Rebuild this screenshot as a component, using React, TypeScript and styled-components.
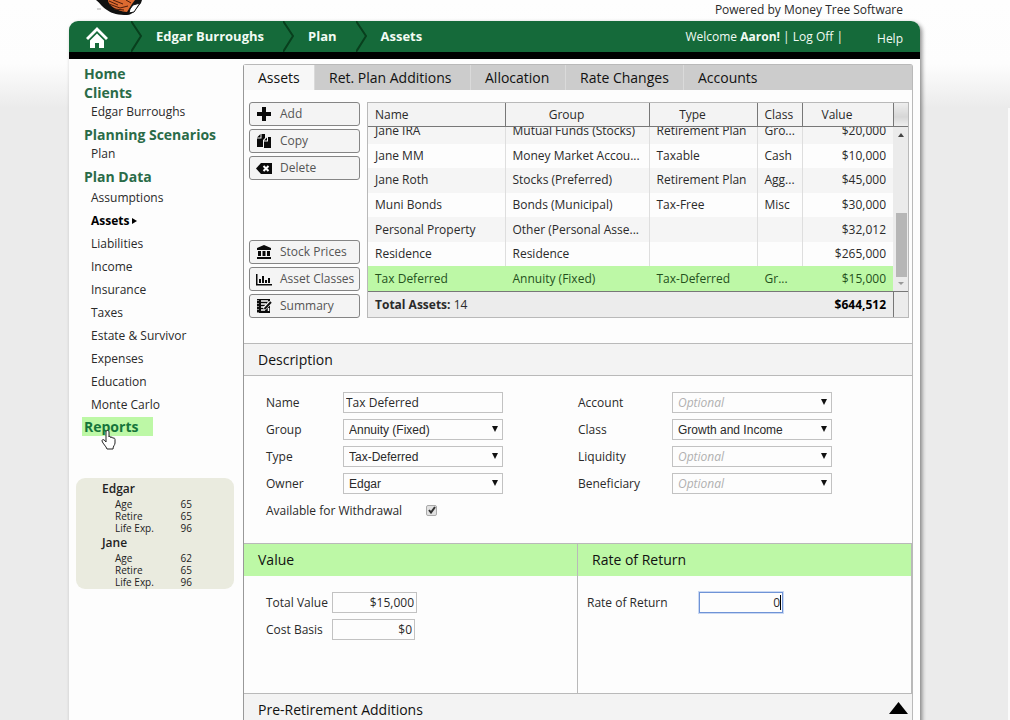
import React, { useId } from 'react';
import styled, { createGlobalStyle, css } from 'styled-components';

const font = '"Open Sans", "Noto Sans", sans-serif';
const green = '#156a3a';
const highlight = '#bdf8a6';
const line = '#b9b9b9';

const GlobalStyle = createGlobalStyle`
  * { box-sizing: border-box; }
  html { background: #ebebeb; }
  body {
    margin: 0;
    font: 12px/20px ${font};
    color: #2a2a2a;
    background: linear-gradient(#fefefe 0, #fdfdfd 64px, #ebebeb 108px) no-repeat;
    min-height: 100vh;
    overflow: hidden;
  }
  button, input, select { font: inherit; color: inherit; }
  a { color: inherit; text-decoration: none; }
`;

/* ---------- page frame ---------- */

const Page = styled.div`
  display: flex;
  align-items: flex-start;
  height: 100vh;
  overflow: hidden;
`;

const Frame = styled.div`
  flex: 1;
  margin: 0 88px 0 69px;
`;

const PageEdge = styled.div`
  flex: none;
  width: 2px;
  height: 100vh;
  margin-top: 108px;
  background: #fafafa;
`;

const Masthead = styled.header`
  display: flex;
  justify-content: space-between;
  align-items: flex-start;
  height: 21px;
  padding: 0 17px 0 26px;
`;

const Powered = styled.span`
  line-height: 20px;
`;

const Panel = styled.div`
  border-radius: 9px 9px 0 0;
  background: #fdfdfd;
  box-shadow: 2px 2px 4px rgba(0, 0, 0, 0.45);
  min-height: 740px;
`;

const NavBar = styled.nav`
  display: flex;
  align-items: stretch;
  height: 38px;
  border-bottom: 7px solid #000;
  border-radius: 9px 9px 0 0;
  background: ${green};
  color: #f2fbf4;
  font-weight: 500;
  overflow: hidden;
`;

const HomeLink = styled.a`
  display: flex;
  align-items: center;
  width: 62px;
  padding: 3px 0 0 17px;
`;

const Crumb = styled.a`
  padding: 0 19px 0 13px;
  font-size: 13px;
  font-weight: 700;
  line-height: 31px;
`;

const Account = styled.div`
  margin-left: auto;
  padding-right: 17px;
  display: flex;
  gap: 34px;
  line-height: 32px;
`;

const HelpLink = styled.a`
  line-height: 36px;
`;

const Columns = styled.div`
  display: flex;
  align-items: flex-start;
  padding: 5px 7px 0 0;
`;

/* ---------- side menu ---------- */

const Side = styled.aside`
  flex: none;
  width: 174px;
`;

const SideNav = styled.nav`
  padding-left: 13px;
`;

const SideHeading = styled.a<{ $active?: boolean }>`
  display: block;
  position: relative;
  width: ${p => (p.$active ? '71px' : 'auto')};
  padding-left: 2px;
  font-size: 14px;
  line-height: 19px;
  font-weight: 700;
  color: ${p => (p.$active ? '#15753a' : '#2a6b48')};
  background: ${p => (p.$active ? highlight : 'transparent')};
`;

const SideList = styled.ul<{ $spaced?: boolean }>`
  list-style: none;
  margin: 0 0 ${p => (p.$spaced ? '1px' : '3px')};
  padding: 0 0 0 9px;
  line-height: ${p => (p.$spaced ? '23px' : '20px')};
`;

const SideItem = styled.a<{ $current?: boolean }>`
  display: flex;
  align-items: center;
  gap: 3px;
  ${p => p.$current && css`font-weight: 700; color: #000;`}
`;

const HandCursor = styled.svg`
  position: absolute;
  left: 18px;
  top: 12px;
`;

const FamilyBox = styled.section`
  margin: 42px 9px 0 7px;
  padding: 2px 42px 1px 26px;
  border-radius: 9px;
  background: #eaebdf;
  color: #222;
`;

const Person = styled.h3`
  margin: 0;
  font-size: 12px;
  line-height: 18px;
  font-weight: 600;
`;

const Facts = styled.dl`
  display: grid;
  grid-template-columns: 1fr auto;
  margin: 0;
  padding-left: 13px;
  font-size: 10px;
  line-height: 12px;
  dt, dd { margin: 0; }
`;

/* ---------- main area ---------- */

const Main = styled.main`
  flex: 1;
  min-width: 0;
  border: 1px solid ${line};
  border-left-color: #999;
  border-radius: 3px 3px 0 0;
`;

const TabBar = styled.div`
  display: flex;
  height: 25px;
  background: #ccc;
`;

const Tab = styled.button<{ $active?: boolean; $w: number }>`
  width: ${p => p.$w}px;
  border: 0;
  border-right: 1px solid #dadada;
  padding: 0 0 0 14px;
  text-align: left;
  white-space: nowrap;
  font-size: 14px;
  line-height: 24px;
  color: #111;
  background: ${p => (p.$active ? '#f7f7f7' : 'transparent')};
  &:last-child { border-right: 0; }
`;

const AssetArea = styled.div`
  display: flex;
  gap: 7px;
  padding: 12px 3px 25px 5px;
`;

const Tools = styled.div`
  display: flex;
  flex-direction: column;
  justify-content: space-between;
  flex: none;
  width: 111px;
`;

const ToolGroup = styled.div`
  display: flex;
  flex-direction: column;
  gap: 3px;
`;

const ToolButton = styled.button`
  display: flex;
  align-items: center;
  gap: 8px;
  height: 24px;
  padding: 0 0 0 6px;
  border: 1px solid #858585;
  border-radius: 3px;
  background: #f4f4f4;
  color: #555;
  white-space: nowrap;
  svg { flex: none; color: #0a0a0a; }
`;

const GridFrame = styled.div`
  flex: 1;
  min-width: 0;
  border: 1px solid ${line};
`;

const DataTable = styled.table`
  width: 100%;
  table-layout: fixed;
  border-collapse: collapse;
  th, td {
    padding: 0 2px 0 7px;
    overflow: hidden;
    white-space: nowrap;
    text-overflow: ellipsis;
    text-align: left;
    font-weight: 400;
  }
`;

const HeadTable = styled(DataTable)`
  height: 24px;
  background: #f3f3f3;
  border-bottom: 1px solid #777;
  th { border-right: 1px solid #777; }
  th:nth-child(2), th:nth-child(3), th:nth-child(5) { text-align: center; padding-right: 28px; }
  td { background: linear-gradient(#eee, #d6d6d6 60%, #eee); }
`;

const Viewport = styled.div`
  display: flex;
  height: 164px;
`;

const Rows = styled.div`
  flex: 1;
  min-width: 0;
  display: flex;
  align-items: flex-end;
  overflow: hidden;
`;

const BodyTable = styled(DataTable)`
  height: 172px;
  flex: none;
  td { border-right: 1px solid #dedede; }
  td:last-child { text-align: right; border-right: 0; padding-right: 7px; }
`;

const Row = styled.tr<{ $selected?: boolean }>`
  background: #fdfdfd;
  &:nth-child(odd) { background: #f5f5f5; }
  ${p => p.$selected && css`
    && { background: ${highlight}; color: #24501c; }
    && td { border-color: ${highlight}; }
  `}
`;

const ScrollTrack = styled.div`
  display: flex;
  flex-direction: column;
  align-items: center;
  width: 15px;
  padding: 6px 1px 6px 2px;
  background: #ebebeb;
`;

const ScrollThumb = styled.div`
  width: 11px;
  height: 64px;
  margin: auto 0 5px;
  background: #b6b6b6;
`;

const Totals = styled.div`
  display: flex;
  height: 26px;
  line-height: 25px;
  border-top: 1px solid #777;
  background: #ececec;
`;

const TotalCount = styled.span`
  flex: 1;
  padding-left: 7px;
`;

const TotalValue = styled.strong`
  padding-right: 7px;
  color: #000;
`;

const TotalEnd = styled.span`
  width: 15px;
  border-left: 1px solid #777;
`;

const Bar = styled.h2<{ $green?: boolean }>`
  display: flex;
  justify-content: space-between;
  align-items: center;
  margin: 0;
  height: 33px;
  padding: 0 4px 0 14px;
  border-top: 1px solid ${line};
  border-bottom: 1px solid ${p => (p.$green ? highlight : line)};
  background: ${p => (p.$green ? highlight : '#f3f3f3')};
  font-size: 14px;
  font-weight: 400;
  color: #111;
`;

const CollapseButton = styled.button`
  border: 0;
  padding: 0 0 4px;
  display: flex;
  background: none;
  color: #000;
`;

const FormGrid = styled.form`
  display: grid;
  grid-template-columns: 1fr 1fr;
  padding: 16px 0 22px;
`;

const FieldColumn = styled.div<{ $indent: number }>`
  display: flex;
  flex-direction: column;
  gap: 6px;
  padding-left: ${p => p.$indent}px;
`;

const FieldRow = styled.div`
  display: flex;
  align-items: center;
  min-height: 21px;
`;

const Label = styled.label<{ $w: number }>`
  flex: none;
  width: ${p => p.$w}px;
  white-space: nowrap;
`;

const control = css`
  height: 21px;
  border: 1px solid #c2c2c2;
  border-radius: 0;
  background: #fdfdfd;
  outline: 0;
`;

const TextInput = styled.input`
  ${control}
  width: 160px;
  padding: 0 2px;
`;

const MoneyInput = styled.input<{ $w: number; $focused?: boolean }>`
  ${control}
  width: ${p => p.$w}px;
  padding: 0 2px;
  text-align: right;
  ${p => p.$focused && css`border: 1px solid #6f93d6; box-shadow: 0 0 0 1px #c9d8f3;`}
`;

const SelectWrap = styled.span`
  position: relative;
  display: flex;
  svg { position: absolute; right: 5px; top: 7px; pointer-events: none; }
`;

const Select = styled.select<{ $empty?: boolean }>`
  ${control}
  appearance: none;
  width: 160px;
  padding: 0 20px 0 5px;
  line-height: 18px;
  font-family: "Liberation Sans", Arial, sans-serif;
  ${p => p.$empty && css`font-family: ${font}; font-style: italic; color: #b0b0b0;`}
`;

const CheckWrap = styled.span`
  position: relative;
  display: flex;
  svg { position: absolute; left: 2px; top: 1px; pointer-events: none; }
`;

const Check = styled.input`
  appearance: none;
  width: 11px;
  height: 11px;
  margin: 0;
  border: 1px solid #aaa;
  border-radius: 2px;
  background: #e2e2e2;
`;

const Halves = styled.div`
  display: grid;
  grid-template-columns: 1fr 1fr;
`;

const Half = styled.section`
  min-height: 150px;
  border-right: 1px solid ${line};
`;

const HalfBody = styled.div<{ $indent: number }>`
  display: flex;
  flex-direction: column;
  gap: 6px;
  padding: 16px 0 0 ${p => p.$indent}px;
`;

const CaretWrap = styled.span`
  position: relative;
  display: flex;
`;

const Caret = styled.i`
  position: absolute;
  right: 2px;
  top: 3px;
  width: 1px;
  height: 15px;
  background: #000;
`;

/* ---------- drawings ---------- */

const Logo = () => (
  <svg width="48" height="16" viewBox="0 0 48 16" role="img" aria-label="Beaver logo">
    <path d="M1 0 C5 3 8 8 12 10 C17 14 24 15 32 15 C38 15 40 10 46 3 L47 0Z" fill="#111" />
    <path d="M13 0 C13 5 21 11 32 12 L37 4 L40 0Z" fill="#dd6a30" />
    <path
      d="M14 1 L23 5 M18 0 L28 4 M14 4 L25 8 L33 6 M19 9 L29 10 M31 0 L36 3"
      stroke="#4d1d0c" fill="none"
    />
    <path d="M45 3 L39 12 L34 13 L35 9 L38 5Z" fill="#fff" stroke="#111" />
    <path d="M2 9h4" stroke="#aaa" />
  </svg>
);

const HomeIcon = () => (
  <svg width="22" height="22" viewBox="0 0 22 22" fill="#fff">
    <path d="M11 0 L22 11 L20 13 L11 4 L2 13 L0 11Z" />
    <path d="M11 6.500 L18 13.500 V21 H13 V16 H9 V21 H4 V13.500Z" />
  </svg>
);

const Chevron = () => (
  <svg width="12" height="31" viewBox="0 0 12 31" fill="none">
    <path d="M0 0 L10 15 L0 31" stroke="#083f1d" strokeWidth="2" />
  </svg>
);

const DownMark = () => (
  <svg width="6" height="6" viewBox="0 0 6 6"><path d="M0 0H6L3 6Z" fill="#111" /></svg>
);

const icons: Record<string, React.ReactNode> = {
  Add: <path d="M6 1h4v5h5v4h-5v5H6v-5H1V6h5z" />,
  Copy: <path d="M5.500 1H9v4L7 7v7H1V5.500h4.500zM1 4.500L4.500 1v3.500zM12 4h3v11H8V8.500h4zM8 7.500L11 4.500v3z" />,
  Delete: (
    <>
      <path d="M5 3h11v11H5L0 8.500z" />
      <path d="M7.500 6l5 5M12.500 6l-5 5" stroke="#fff" strokeWidth="2" />
    </>
  ),
  'Stock Prices': <path d="M8 1l7 3v2H1V4zM2 7h3v5H2zM6.500 7h3v5h-3zM11 7h3v5h-3zM1 13h14v2H1z" />,
  'Asset Classes': <path d="M0 3h1.500v10H16v1.500H0zM3 8h2v4H3zM6 5h2v7H6zM9 9h2v3H9zM12 7h2v5h-2z" />,
  Summary: (
    <>
      <path d="M1 1h13v14H1z" />
      <path d="M5 3h7M5 6h5M5 9h3M5 12h4M12.500 10v3" stroke="#fff" strokeWidth="1.500" />
      <path d="M2 2v13" stroke="#fff" strokeDasharray="1 2" />
      <path d="M14.500 4L8 11" stroke="#fff" strokeWidth="4" />
      <path d="M15 4L8.500 11" stroke="#111" strokeWidth="2" />
    </>
  ),
};

const Tool = ({ name }: { name: string }) => (
  <ToolButton type="button">
    <svg width="16" height="16" viewBox="0 0 16 16" fill="currentColor">{icons[name]}</svg>
    {name}
  </ToolButton>
);

/* ---------- parts ---------- */

const Col = styled.col<{ $w?: number }>`
  width: ${p => (p.$w ? `${p.$w}px` : 'auto')};
`;

const AssetColumns = ({ end }: { end?: boolean }) => (
  <colgroup>
    <Col $w={137} />
    <Col />
    <Col $w={108} />
    <Col $w={45} />
    <Col $w={91} />
    {end && <Col $w={15} />}
  </colgroup>
);

const tabs: [string, number][] = [
  ['Assets', 71],
  ['Ret. Plan Additions', 156],
  ['Allocation', 95],
  ['Rate Changes', 118],
  ['Accounts', 90],
];

const assets = [
  ['Jane IRA', 'Mutual Funds (Stocks)', 'Retirement Plan', 'Gro...', '$20,000'],
  ['Jane MM', 'Money Market Accou...', 'Taxable', 'Cash', '$10,000'],
  ['Jane Roth', 'Stocks (Preferred)', 'Retirement Plan', 'Agg...', '$45,000'],
  ['Muni Bonds', 'Bonds (Municipal)', 'Tax-Free', 'Misc', '$30,000'],
  ['Personal Property', 'Other (Personal Asse...', '', '', '$32,012'],
  ['Residence', 'Residence', '', '', '$265,000'],
  ['Tax Deferred', 'Annuity (Fixed)', 'Tax-Deferred', 'Gr...', '$15,000'],
];

const planData = ['Assumptions', 'Assets', 'Liabilities', 'Income', 'Insurance', 'Taxes',
  'Estate & Survivor', 'Expenses', 'Education', 'Monte Carlo'];

const family = [
  { name: 'Edgar', facts: [['Age', 65], ['Retire', 65], ['Life Exp.', 96]] },
  { name: 'Jane', facts: [['Age', 62], ['Retire', 65], ['Life Exp.', 96]] },
];

const SelectField = ({ label, value, w }: { label: string; value?: string; w: number }) => {
  const id = useId();
  return (
    <FieldRow>
      <Label htmlFor={id} $w={w}>{label}</Label>
      <SelectWrap>
        <Select id={id} $empty={!value}><option>{value ?? 'Optional'}</option></Select>
        <DownMark />
      </SelectWrap>
    </FieldRow>
  );
};

export default function App() {
  return (
    <Page>
      <GlobalStyle />
      <Frame>
        <Masthead>
          <Logo />
          <Powered>Powered by Money Tree Software</Powered>
        </Masthead>
        <Panel>
          <NavBar>
            <HomeLink href="#home" aria-label="Home"><HomeIcon /></HomeLink>
            <Chevron />
            <Crumb href="#client">Edgar Burroughs</Crumb>
            <Chevron />
            <Crumb href="#plan">Plan</Crumb>
            <Chevron />
            <Crumb href="#assets">Assets</Crumb>
            <Account>
              <span>Welcome <b>Aaron!</b> | <a href="#logoff">Log Off</a> |</span>
              <HelpLink href="#help">Help</HelpLink>
            </Account>
          </NavBar>
          <Columns>
            <Side>
              <SideNav>
                <SideHeading href="#home">Home</SideHeading>
                <SideHeading href="#clients">Clients</SideHeading>
                <SideList><li><SideItem href="#client">Edgar Burroughs</SideItem></li></SideList>
                <SideHeading href="#scenarios">Planning Scenarios</SideHeading>
                <SideList><li><SideItem href="#plan">Plan</SideItem></li></SideList>
                <SideHeading href="#data">Plan Data</SideHeading>
                <SideList $spaced>
                  {planData.map(name => (
                    <li key={name}>
                      <SideItem href={'#' + name} $current={name === 'Assets'}>
                        {name}
                        {name === 'Assets' && (
                          <svg width="5" height="6" viewBox="0 0 5 6"><path d="M0 0L5 3L0 6Z" /></svg>
                        )}
                      </SideItem>
                    </li>
                  ))}
                </SideList>
                <SideHeading href="#reports" $active>
                  Reports
                  <HandCursor width="17" height="21" viewBox="0 0 17 21">
                    <path
                      d="M6 13V3C6 1 9 1 9 3V8C9 7 11 7 11 9C11 7.500 13 8 13 9.500C13.500 8.500 15 9 15 10.500V14C15 16 13 17 13 20H7C6 17 3 15 2 12C2 10 4 10 6 13Z"
                      fill="#fff" stroke="#222"
                    />
                  </HandCursor>
                </SideHeading>
              </SideNav>
              <FamilyBox>
                {family.map(p => (
                  <div key={p.name}>
                    <Person>{p.name}</Person>
                    <Facts>
                      {p.facts.map(([k, v]) => (
                        <React.Fragment key={k}><dt>{k}</dt><dd>{v}</dd></React.Fragment>
                      ))}
                    </Facts>
                  </div>
                ))}
              </FamilyBox>
            </Side>
            <Main>
              <TabBar role="tablist">
                {tabs.map(([t, w], i) => (
                  <Tab key={t} role="tab" aria-selected={i === 0} $active={i === 0} $w={w}>{t}</Tab>
                ))}
              </TabBar>
              <AssetArea>
                <Tools>
                  <ToolGroup><Tool name="Add" /><Tool name="Copy" /><Tool name="Delete" /></ToolGroup>
                  <ToolGroup><Tool name="Stock Prices" /><Tool name="Asset Classes" /><Tool name="Summary" /></ToolGroup>
                </Tools>
                <GridFrame>
                  <HeadTable>
                    <AssetColumns end />
                    <thead>
                      <tr>
                        {['Name', 'Group', 'Type', 'Class', 'Value'].map(h => <th key={h} scope="col">{h}</th>)}
                        <td />
                      </tr>
                    </thead>
                  </HeadTable>
                  <Viewport>
                    <Rows>
                      <BodyTable>
                        <AssetColumns />
                        <tbody>
                          {assets.map((r, i) => (
                            <Row key={r[0]} $selected={i === assets.length - 1}>
                              {r.map((c, j) => <td key={j}>{c}</td>)}
                            </Row>
                          ))}
                        </tbody>
                      </BodyTable>
                    </Rows>
                    <ScrollTrack>
                      <svg width="6" height="4" viewBox="0 0 6 4"><path d="M3 0L6 4H0Z" fill="#444" /></svg>
                      <ScrollThumb />
                      <svg width="6" height="3" viewBox="0 0 6 3"><path d="M0 0H6L3 3Z" fill="#999" /></svg>
                    </ScrollTrack>
                  </Viewport>
                  <Totals>
                    <TotalCount><b>Total Assets:</b> 14</TotalCount>
                    <TotalValue>$644,512</TotalValue>
                    <TotalEnd />
                  </Totals>
                </GridFrame>
              </AssetArea>
              <Bar>Description</Bar>
              <FormGrid>
                <FieldColumn $indent={22}>
                  <FieldRow>
                    <Label htmlFor="name" $w={77}>Name</Label>
                    <TextInput id="name" defaultValue="Tax Deferred" />
                  </FieldRow>
                  <SelectField label="Group" value="Annuity (Fixed)" w={77} />
                  <SelectField label="Type" value="Tax-Deferred" w={77} />
                  <SelectField label="Owner" value="Edgar" w={77} />
                  <FieldRow>
                    <Label htmlFor="avail" $w={160}>Available for Withdrawal</Label>
                    <CheckWrap>
                      <Check id="avail" type="checkbox" defaultChecked />
                      <svg width="8" height="8" viewBox="0 0 8 8">
                        <path d="M1 4L3 6.500L7 1" stroke="#333" strokeWidth="2" fill="none" />
                      </svg>
                    </CheckWrap>
                  </FieldRow>
                </FieldColumn>
                <FieldColumn $indent={0}>
                  <SelectField label="Account" w={94} />
                  <SelectField label="Class" value="Growth and Income" w={94} />
                  <SelectField label="Liquidity" w={94} />
                  <SelectField label="Beneficiary" w={94} />
                </FieldColumn>
              </FormGrid>
              <Halves>
                <Half>
                  <Bar $green>Value</Bar>
                  <HalfBody $indent={22}>
                    <FieldRow>
                      <Label htmlFor="total" $w={66}>Total Value</Label>
                      <MoneyInput id="total" $w={85} defaultValue="$15,000" />
                    </FieldRow>
                    <FieldRow>
                      <Label htmlFor="basis" $w={66}>Cost Basis</Label>
                      <MoneyInput id="basis" $w={83} defaultValue="$0" />
                    </FieldRow>
                  </HalfBody>
                </Half>
                <Half>
                  <Bar $green>Rate of Return</Bar>
                  <HalfBody $indent={9}>
                    <FieldRow>
                      <Label htmlFor="rate" $w={112}>Rate of Return</Label>
                      <CaretWrap>
                        <MoneyInput id="rate" $w={84} $focused defaultValue="0" />
                        <Caret />
                      </CaretWrap>
                    </FieldRow>
                  </HalfBody>
                </Half>
              </Halves>
              <Bar>
                Pre-Retirement Additions
                <CollapseButton type="button" aria-label="Collapse">
                  <svg width="19" height="12" viewBox="0 0 19 12"><path d="M9.500 0L19 12H0Z" /></svg>
                </CollapseButton>
              </Bar>
            </Main>
          </Columns>
        </Panel>
      </Frame>
      <PageEdge />
    </Page>
  );
}
